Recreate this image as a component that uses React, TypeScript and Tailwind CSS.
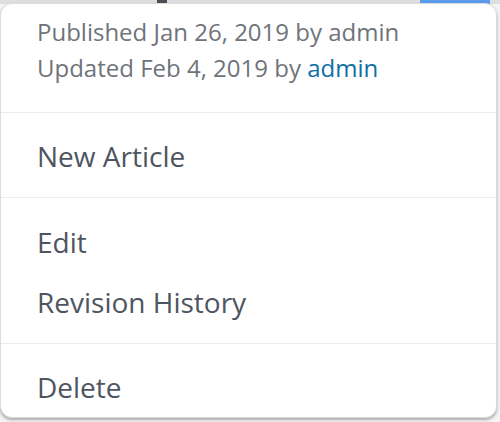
export default function App() {
  const item = "flex h-[60px] items-center text-[28px] leading-none text-[#4f5560]"
  return (
    <div
      className="relative h-[422px] w-[500px] overflow-hidden bg-[#f4f4f4]"
      style={{ fontFamily: '"Open Sans", "Noto Sans", sans-serif' }}
    >
      <div className="flex h-[4px] bg-[#dedede]">
        <div className="ml-[157px] h-full w-[10px] bg-[#4a4f57]" />
        <div className="ml-auto mr-[10px] h-full w-[70px] bg-[#5b9bec]" />
      </div>
      <div className="absolute left-0 top-[3px] flex h-[415px] w-[497px] flex-col overflow-hidden rounded-[12px] border border-[#dcdcdc] bg-white shadow-[0_2px_3px_rgba(0,0,0,0.3)]">
        <div className="px-[36px] pb-[26px] pt-[10px] text-[24px] leading-[36px] text-[#6f737a]">
          <div>Published Jan 26, 2019 by admin</div>
          <div>
            Updated Feb 4, 2019 by <a className="text-[#0e6fa5]">admin</a>
          </div>
        </div>
        <div className="h-[2px] bg-[#ececec]" />
        <div className="px-[36px] pb-[11px] pt-[14px]">
          <div className={item}>New Article</div>
        </div>
        <div className="h-[2px] bg-[#ececec]" />
        <div className="px-[36px] pb-[11px] pt-[14px]">
          <div className={item}>Edit</div>
          <div className={item}>Revision History</div>
        </div>
        <div className="h-[2px] bg-[#ececec]" />
        <div className="px-[36px] pt-[14px]">
          <div className={item}>Delete</div>
        </div>
      </div>
    </div>
  )
}
